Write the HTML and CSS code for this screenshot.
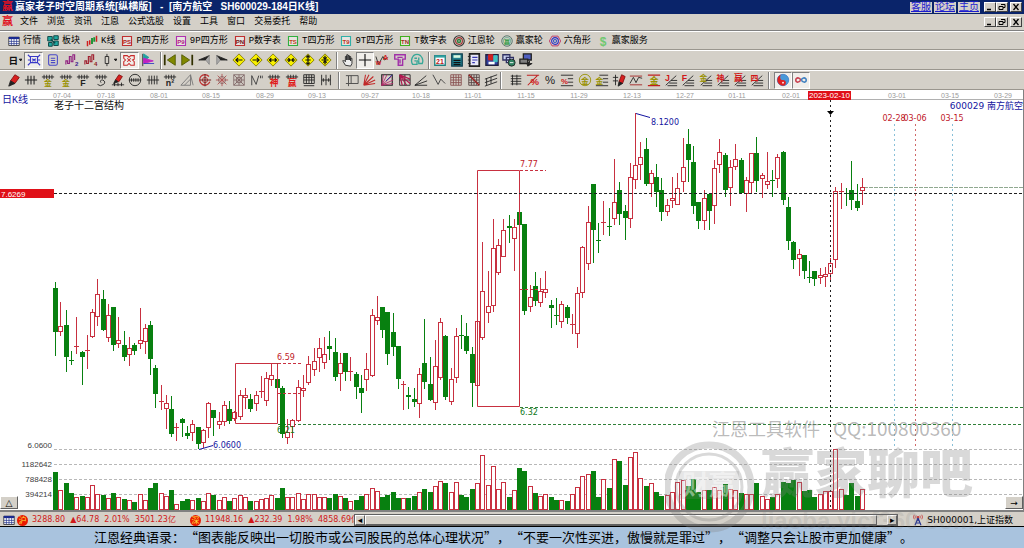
FILE: index.html
```html
<!DOCTYPE html>
<html lang="zh-CN">
<head>
  <meta charset="UTF-8">
  <meta name="viewport" content="width=device-width, initial-scale=1.0">
  <title>赢家老子时空周期系统</title>
  <link rel="stylesheet" href="styles.css">
</head>
<body>
  <header class="titlebar">
    <span class="logo">赢</span>
    <h1>赢家老子时空周期系统[纵横版]   -  [南方航空   SH600029-184日K线]</h1>
    <nav class="links">
      <a href="#service">客服</a>
      <a href="#forum">论坛</a>
      <a href="#home">主页</a>
    </nav>
    <div class="controls" data-controls></div>
  </header>

  <nav class="menubar">
    <span class="logo">赢</span>
    <button>文件</button>
    <button>浏览</button>
    <button>资讯</button>
    <button>江恩</button>
    <button>公式选股</button>
    <button>设置</button>
    <button>工具</button>
    <button>窗口</button>
    <button>交易委托</button>
    <button>帮助</button>
    <div class="controls" data-controls></div>
  </nav>

  <div class="toolbar labels">
    <button data-icon="grid">行情</button>
    <button data-icon="blocks">板块</button>
    <button data-icon="kline">K线</button>
    <button data-icon="ps">P四方形</button>
    <button data-icon="p9">9P四方形</button>
    <button data-icon="pn">P数字表</button>
    <button data-icon="ts">T四方形</button>
    <button data-icon="t9">9T四方形</button>
    <button data-icon="tn">T数字表</button>
    <button data-icon="gann">江恩轮</button>
    <button data-icon="wheel">赢家轮</button>
    <button data-icon="hex">六角形</button>
    <button data-icon="dollar">赢家服务</button>
  </div>

  <div class="toolbar">
    <div class="group period" data-group="day box* list wave1 wave2 candle red* flag"></div>
    <div class="group moves" data-group="first last prev next dleft dright dwide dnarrow dup ddown"></div>
    <div class="group tools" data-group="hand cross* zigzag tee brain"></div>
    <div class="group files" data-group="calendar calc note save copy print"></div>
  </div>

  <div class="toolbar">
    <div class="group lines" data-group="pen bars gold1 gold2 ef spiral penbar circ bars2 nsq tri target star web nline shen ying gridbar split"></div>
    <div class="group fans" data-group="frame fan fanbox fanbox2 angle vee mesh mesh2 chan"></div>
    <div class="group levels" data-group="ladder pctline pct pctbar goldcirc goldbar penline wavebox goldline jfan ffan goldfan shenfan yingfan sifan"></div>
    <div class="group marks" data-group="yin* inf*"></div>
  </div>

  <main class="chart">
    <svg id="kline" role="img" aria-label="南方航空 日K线"></svg>
    <button class="expand" aria-label="展开">△</button>
    <button class="forward" aria-label="向右">→</button>
  </main>

  <footer class="status">
    <span data-icon="grid"></span>
    <span class="coin">沪</span>
    <span class="quote">3288.80  ▲64.78  2.01%  3501.23亿</span>
    <span class="coin">深</span>
    <span class="quote second">11948.16  ▲232.39  1.98%  4858.69亿</span>
    <div class="scroll">
      <button aria-label="左">◂</button>
      <div class="thumb"></div>
      <button aria-label="右">▸</button>
    </div>
    <span class="index"><span data-icon="antenna"></span>SH000001,上证指数</span>
  </footer>

  <p class="motto">江恩经典语录：“图表能反映出一切股市或公司股民的总体心理状况”，“不要一次性买进，傲慢就是罪过”，“调整只会让股市更加健康”。</p>

  <svg class="watermark" aria-hidden="true">
    <text x="47" y="25" class="wm-small">江恩工具软件</text>
    <text x="168" y="25" class="wm-small wm-qq">QQ:100800360</text>
    <circle cx="44" cy="76" r="42" class="wm-ring"/>
    <circle cx="44" cy="76" r="33" class="wm-ring thin"/>
    <path d="M14 60h60v28h-60z" class="wm-fill"/>
    <text x="17" y="84" class="wm-logo">财赢</text>
    <text x="96" y="82" class="wm-big">赢家聊吧</text>
    <text x="96" y="118" class="wm-url">liaoba.yjcf360.com</text>
  </svg>

  <script src="script.js"></script>
</body>
</html>
```
FILE: styles.css
```css
* {
  box-sizing: border-box;
}

body {
  margin: 0;
  min-height: 100vh;
  display: flex;
  flex-direction: column;
  position: relative;
  overflow: hidden;
  background-color: #d4d0c8;
  color: #000000;
  font-family: "Liberation Mono", "Noto Sans CJK SC", monospace;
  font-size: 9px;
  line-height: 12px;
}

button {
  background: none;
  border: none;
  padding: 0;
  margin: 0;
  color: inherit;
  font: inherit;
  white-space: nowrap;
}

/* title bar */
.titlebar {
  display: flex;
  align-items: center;
  height: 14px;
  padding: 0 2px;
  background-color: #0a246a;
  color: #ffffff;
}

.titlebar h1 {
  flex: 1;
  margin: 0;
  font: bold 10px/14px "Liberation Sans", "Noto Sans CJK SC", sans-serif;
  white-space: pre;
}

.logo {
  width: 13px;
  color: #e01020;
  font-size: 11px;
  font-weight: bold;
}

.links {
  display: flex;
  gap: 2px;
  margin-right: 4px;
}

.links a {
  padding: 0 1px;
  background-color: #d4d0c8;
  color: #1a1ad0;
  font-size: 10px;
  line-height: 11px;
}

.controls {
  display: flex;
  margin-left: auto;
}

.controls button {
  width: 12px;
  height: 10px;
  display: flex;
  background-color: #d4d0c8;
  border: 1px solid;
  border-color: #ffffff #404040 #404040 #ffffff;
}

.controls button:last-child {
  margin-left: 2px;
}

.controls svg {
  width: 10px;
  height: 8px;
}

/* menu */
.menubar {
  display: flex;
  align-items: center;
  gap: 9px;
  height: 17px;
  padding: 0 2px;
  border-bottom: 1px solid #808080;
}

.menubar .logo {
  width: 9px;
}

/* toolbars */
.toolbar {
  display: flex;
  align-items: center;
  height: 20px;
  padding-left: 5px;
  border-top: 1px solid #ffffff;
  border-bottom: 1px solid #9a968e;
}

.labels {
  gap: 6px;
  padding-left: 8px;
  height: 19px;
}

.labels button {
  display: flex;
  align-items: center;
  gap: 3px;
}

.labels svg,
.status svg {
  width: 12px;
  height: 12px;
}

.group {
  display: grid;
  grid-auto-flow: column;
  grid-auto-columns: 1fr;
  flex: none;
}

.group + .group {
  border-left: 1px solid #808080;
  box-shadow: inset 1px 0 #ffffff;
}

.group button {
  display: flex;
  justify-content: center;
  align-items: center;
  height: 17px;
}

.group svg {
  width: 14px;
  height: 14px;
  flex: none;
}

.group .on {
  background-color: #f0eeea;
  border: 1px solid;
  border-color: #808080 #ffffff #ffffff #808080;
}

.period { width: 155px; padding-right: 2px; }
.moves { width: 176px; padding-right: 2px; }
.tools { width: 92px; padding: 0 2px; }
.files { width: 107px; padding-left: 2px; }
.lines { width: 333px; padding-right: 3px; }
.fans { width: 162px; padding-left: 4px; }
.levels { width: 268px; padding: 0 2px 0 6px; }
.marks { width: 42px; padding-left: 5px; }

/* chart */
.chart {
  position: relative;
  background-color: #ffffff;
  border-right: 1px solid #808080;
}

.chart > svg {
  display: block;
  width: 100%;
  height: 420px;
}

.chart > button {
  position: absolute;
  bottom: 1px;
  width: 18px;
  height: 13px;
  background-color: #d4d0c8;
  border: 1px solid;
  border-color: #ffffff #606060 #606060 #ffffff;
  font-family: "DejaVu Sans", sans-serif;
  line-height: 10px;
}

.expand { left: 0; }
.forward { right: 0; }

.date { fill: #9a9a9a; font: 7px "Liberation Sans", sans-serif; text-anchor: middle; }
.today { fill: #ffffff; font: 8px "Liberation Sans", sans-serif; text-anchor: middle; }
.name { fill: #1414a0; font-size: 10px; }
.caption { fill: #101010; font-size: 10px; }
.stock { fill: #1414a0; font: 9px "DejaVu Sans", "Noto Sans CJK SC", sans-serif; text-anchor: end; }
.scale { fill: #404040; font: 8px "Liberation Sans", sans-serif; text-anchor: end; }
.cursor { fill: #ffffff; font: 8px "Liberation Sans", sans-serif; }
.red, .green, .blue { font: 8px "DejaVu Sans", sans-serif; }
.red { fill: #c01828; }
.green { fill: #107818; }
.blue { fill: #1414a0; }
.forecast { fill: #c01828; font: 8px "DejaVu Sans", sans-serif; text-anchor: middle; }

/* status bar */
.status {
  display: flex;
  align-items: center;
  height: 17px;
  padding: 2px 11px 0 3px;
  border-top: 2px solid #808080;
  border-bottom: 1px solid #000000;
}

.status > span:first-child {
  display: flex;
  margin-right: 2px;
}

.coin {
  flex: none;
  width: 11px;
  height: 11px;
  margin-right: 4px;
  border-radius: 50%;
  background-color: #e81800;
  color: #ffe040;
  font-size: 8px;
  line-height: 11px;
  text-align: center;
}

.quote {
  width: 158px;
  color: #d01818;
  font: 8px/12px "DejaVu Sans", "Noto Sans CJK SC", sans-serif;
  white-space: pre;
  overflow: hidden;
}

.second {
  width: 149px;
}

.scroll {
  flex: 1;
  display: flex;
  height: 12px;
  border: 1px solid #606060;
}

.scroll button {
  width: 10px;
  background-color: #d4d0c8;
  border: 1px solid;
  border-color: #ffffff #606060 #606060 #ffffff;
  font-family: "DejaVu Sans", sans-serif;
  line-height: 8px;
}

.thumb {
  flex: 1;
  margin-right: 10px;
  background-color: #d4d0c8;
  border: 1px solid;
  border-color: #ffffff #606060 #606060 #ffffff;
}

.index {
  display: flex;
  align-items: center;
  gap: 3px;
  margin-left: 14px;
  font: 9px/12px "DejaVu Sans", "Noto Sans CJK SC", sans-serif;
}

.index span {
  display: flex;
}

.motto {
  flex: 1;
  margin: 0;
  padding-left: 94px;
  background-color: #a9c3de;
  font: 13px/20px "Noto Sans CJK SC", sans-serif;
  text-spacing-trim: space-all;
  white-space: nowrap;
}

/* watermark */
.watermark {
  position: absolute;
  right: 0;
  bottom: 0;
  width: 359px;
  height: 137px;
  pointer-events: none;
  font-family: "Noto Sans CJK SC", sans-serif;
  fill: #808080;
  fill-opacity: 0.3;
}

.wm-small { font-size: 18px; fill-opacity: 0.55; }
.wm-qq { font-size: 19px; }
.wm-big { font-size: 53px; font-weight: 900; }
.wm-logo { font-size: 27px; font-weight: bold; fill: #ffffff; fill-opacity: 0.45; }
.wm-url { font: bold 24px "Liberation Sans", sans-serif; fill-opacity: 0.18; }
.wm-fill { fill-opacity: 0.2; }
.wm-ring { fill: none; stroke: #808080; stroke-opacity: 0.3; stroke-width: 7; }
.thin { stroke-width: 3; }
```
FILE: script.js
```js
// Small helpers for the icon drawings (16x16 box)
const p = (d, c = '#222', w = 1, f = 'none') => `<path d="${d}" stroke="${c}" stroke-width="${w}" fill="${f}"/>`;
const t = (s, x, y, c, size = 9) => `<text x="${x}" y="${y}" fill="${c}" font-size="${size}" font-weight="bold" text-anchor="middle" font-family="Liberation Sans, Noto Sans CJK SC, sans-serif">${s}</text>`;
const o = (r, c, w = 1, f = 'none') => `<circle cx="8" cy="8" r="${r}" stroke="${c}" stroke-width="${w}" fill="${f}"/>`;
const tag = (s, border, c) => p('M2 2h12v12h-12z', border, 1.5, '#e8e4e0') + t(s, 8, 11.5, c, 8);
const diamond = (d) => p('M8 1L15 8L8 15L1 8z', '#807800', 1, '#f8f000') + p(d, '#111', 1.4);
const ticks = p('M1 4.5h14M3.5 2v5M6.5 2v5M9.500 2v5M12.500 2v5');
const penHead = p('M4 9l5-7 5 3-5 7z', '#801010', 1, '#d82020') + p('M4 9l5 3-7 3z', '#222', 1, '#222');
const steps = p('M4 14.500h11M6 11.500h9M8 8.500h7M2 14L14 3');
const rays = 'M2 14L4 2M2 14L8 2M2 14L13 4M2 14L15 8M2 14L15 12';

const icons = {
  grid: p('M1 3h14v11h-14z', '#222', 1, '#fff') + p('M1 4h14', '#1a2a90', 3) + p('M1 8.500h14M1 11.500h14M4.500 5v9M8 5v9M11.500 5v9', '#2a3a90'),
  blocks: p('M1 2h6v6h-6zM9 1h6v5h-6zM2 10h5v5h-5zM9 8h6v6h-6z', '#104848', 1.3, '#20a8a0') + p('M5 6l6 5', '#104848', 2),
  kline: p('M2 8v7M5 7v6M14 1v8', '#d02020', 2) + p('M8 4v8M11 3v6', '#189030', 2.500),
  ps: tag('PS', '#c03030', '#b02020'),
  p9: tag('P9', '#b030b0', '#b02080'),
  pn: tag('PN', '#c03030', '#701818'),
  ts: tag('TS', '#30b040', '#c04020'),
  t9: tag('T9', '#30b0a8', '#c03020'),
  tn: tag('TN', '#40b020', '#a03020'),
  gann: o(7, '#303030', 1.5) + o(4.5, '#a03030', 1.5) + o(2, '#308040', 2),
  wheel: o(7, '#507068', 1.2) + o(5, '#60a890') + t('赢', 8, 11.5, '#40a050', 8),
  hex: p('M4 1.500h8L15.500 8L12 14.500H4L.5 8z', '#c03060', 1.2) + o(4.5, '#3030c0', 1.5) + o(2, '#3050c0', 1.5),
  dollar: t('$', 8, 14, '#70c870', 16),
  antenna: p('M8 5L4 15M8 5l4 10M5 12h6M6 9h4', '#203090', 1.4) + p('M3 1q-2 3 0 6M13 1q2 3 0 6M5.500 2q-1 2 0 4M10.500 2q1 2 0 4', '#c83030') + '<circle cx="8" cy="4" r="1.500" fill="#c83030"/>',

  day: t('日', 6, 12.500, '#111', 11) + p('M13 7h3l-1.500 2z', '#111', 1, '#111'),
  box: p('M4 4h8v7h-8zM1 2l3 3M15 2l-3 3M1 14l3-3M15 14l-3-3M1 8h3M12 8h3M6 6.500l4 3M10 6.500l-4 3', '#3838c8', 1.3),
  list: p('M3 3q0-1 2-1h6q2 0 2 2v8q0 2-2 2h-6q-2 0-2-2zM5.500 6h5M5.500 8.500h5M5.500 11h5', '#4848c8', 1.2),
  wave1: p('M1 13v-4h2v3h2v-8h2v6h2v-8h2v6', '#902080', 1.3) + t('2', 13.500, 15, '#402090', 7),
  wave2: p('M1 13v-4h2v3h2v-8h2v6h2v-8h2v6', '#a02030', 1.3) + t('4', 13.500, 15, '#902020', 7),
  candle: p('M4.500 1v14') + p('M2.500 4h4v8h-4z', '#222', 1, '#d4d0c8') + p('M13 7h3l-1.500 2z', '#111', 1, '#111'),
  red: p('M2 3h4l2 2 2-2h4v4l-2 1 2 2v4h-4l-2-2-2 2H2v-4l2-2-2-2zM6 6l4 4M10 6l-4 4', '#c82828', 1.2),
  flag: p('M2 1v14') + p('M3 1l6 4-6 4z', '#20a0a0', 1, '#20a0a0') + p('M3 6l11 3-11 3z', '#c020c0', 1, '#c020c0') + p('M3 12h12', '#3040c0', 1),
  first: p('M2 2v12', '#303000', 2) + p('M14 2L5 8l9 6z', '#505800', 1, '#808800'),
  last: p('M14 2v12', '#303000', 2) + p('M2 2l9 6-9 6z', '#505800', 1, '#808800'),
  prev: p('M14 3L2 8h8z', '#222', 1, '#222') + p('M10 8l4 5V3', '#888', 1, '#aaa'),
  next: p('M2 3l12 5H6z', '#222', 1, '#222') + p('M6 8l-4 5V3', '#888', 1, '#aaa'),
  dleft: diamond('M12 8H5M7 5.500L4.500 8L7 10.500'),
  dright: diamond('M4 8h7M9 5.500L11.500 8L9 10.500'),
  dwide: diamond('M4 8h8M6 6L4 8l2 2M10 6l2 2-2 2'),
  dnarrow: diamond('M3 8h4M9 8h4M5 6l2 2-2 2M11 6L9 8l2 2'),
  dup: diamond('M8 3v10M6 5l2-2 2 2M6 11l2 2 2-2M5 8h6'),
  ddown: diamond('M8 3v4M8 9v4M6 5l2 2 2-2M6 11l2-2 2 2M4 8h8'),
  hand: p('M5 14l-3-5 1-1 2 2V4h1.500v4V2H8v6V3h1.500v5V4H11v5V6h1.500v6l-1.500 3z', '#222', 1, '#eee'),
  cross: p('M8 1v14M1 8h14', '#111', 1.3),
  zigzag: p('M1 4l3 9 5-9 2 4 4-3') + t('w', 4, 14, '#d02020', 8) + t('A', 12, 8, '#d02020', 8),
  tee: p('M2 2h12v5h-3v7H6V7H2zM5 5h6M8 7v5', '#a030a8', 1.6),
  brain: p('M4 3q4-3 8 0 4 4 2 9h-4v-3h-2v4H3q-3-5 1-10zM5 6h3M10 5v3M5 9h2', '#38a898', 1.5),
  calendar: p('M2 3h12v11H2z', '#208080', 1.500, '#fff') + p('M2 4h12', '#30a0a0', 2.500) + t('21', 8, 13, '#c02020', 8),
  calc: p('M2 1h12v14H2z', '#104050', 1.500, '#208090') + p('M4 4h8', '#d8f8e0', 3) + p('M4 8.500h8M4 11h8M4 13.300h8', '#111', 1.3),
  note: p('M3 1h11v14H3z', '#222', 2, '#e8e8f8') + p('M6 5h6M6 8h6M6 11h3', '#3838b0', 1.300) + p('M1 4h3M1 8h3M1 12h3'),
  save: p('M1 2h14v12H1z', '#202040', 1.500, '#3040a0') + p('M4 2h5v6H4z', '#d02020', 1, '#d02020') + p('M10 3h4v7h-4z', '#40c0c0', 1, '#40c0c0') + p('M4 11.500h7', '#fff', 3),
  copy: p('M1 2h8v6H1zM5 5h8v6H5z', '#303060', 1.500, '#c8d0f0') + '<circle cx="11" cy="11" r="4" fill="#308060" stroke="#222"/>' + p('M9 11h4', '#fff'),
  print: p('M5 1h9v7H5z', '#222', 1.500, '#5060c0') + p('M1 7h9v5H1z', '#222', 1.500, '#808080') + p('M12 9v3h3l-5 3-1-3', '#222', 1, '#222'),

  pen: penHead,
  bars: p('M1 8h14M4.500 3v10M8 3v10M11.500 3v10', '#222', 1.2),
  gold1: ticks + t('金', 8, 15, '#989000', 9),
  gold2: ticks + t('金', 8, 15, '#989000', 9),
  ef: ticks + t('F', 8, 15, '#222', 10),
  spiral: ticks + p('M8 11q-2-3 2-3 4 2 1 5-4 3-7 0'),
  penbar: p('M1 13.500h14M4 11v4M8 11v4M12 11v4') + p('M5 8l4-6 4 2-4 6z', '#801010', 1, '#d82020') + p('M5 8l3 2-5 2z', '#222', 1, '#222'),
  circ: o(6.5, '#222') + p('M1 8h14M4 6v4M6.500 6v4M9 6v4M11.500 6v4'),
  bars2: p('M1 8h14M3.500 3v10M6.500 3v10M9.500 3v10M12.500 3v10'),
  nsq: ticks + t('n²', 8, 15, '#222', 10),
  tri: p('M1 14L12 2v12zM12 2l3 12M5 14l7-7', '#777'),
  target: p('M12.500 4a6 6 0 1 0 1 6', '#c03030', 1.4) + o(3, '#b83030') + p('M8 1v14M2 8h13', '#702020', 1.2),
  star: p('M8 1v14M1 8h14M3 3l10 10M13 3L3 13', '#b05050') + o(4, '#886060'),
  web: p('M2 2h12v12H2zM2 2l12 12M14 2L2 14M8 2v12M2 8h12M5 5h6v6H5z', '#806868'),
  nline: p('M2 14V3M2 3l5 10L10 3M12 3v3M14 3v3', '#444', 1.1),
  shen: ticks + t('神', 8, 15, '#e01818', 10),
  ying: ticks + t('赢', 8, 15, '#e01818', 10),
  gridbar: p('M2 2h12v10H2zM2 5h12M2 8h12M5 2v10M8 2v10M11 2v10M2 14.500h12'),
  split: p('M3 2v12M8 2v12M13 2v12M3 8h10M5 6v4M11 6v4'),
  frame: p('M4 3h11v9H4zM1 3h3M1 12h3M4 12v3M7 12v-9', '#444'),
  fan: p(rays, '#c02828', 1.2),
  fanbox: p('M2 2h12v12H2z', '#222', 1.3) + p(rays, '#b02868') + p('M7 9l7-7', '#2828a0'),
  fanbox2: p('M3 2h12v12H3zM3 8h12M9 2v12', '#222') + p('M3 2l3 12M3 2l8 12M3 2l12 10M3 2l12 5', '#b01850', 1.3),
  angle: p('M1 14L14 3M1 14L15 9M1 14h14'),
  vee: p('M1 2l6 11 3-6 3 3M13 10l2 2', '#444', 1.1),
  mesh: p('M2 2h12v12H2zM2 5h12M2 8h12M2 11h12M5 2v12M8 2v12M11 2v12', '#885050'),
  mesh2: p('M2 2h12v12H2zM2 5h12M2 8h12M2 11h12M5 2v12M8 2v12M11 2v12', '#554444') + p('M2 2l12 12', '#a02020', 1.300),
  chan: p('M1 7L15 2M1 11L15 6M1 15l14-5M3 6v8M8 4v8'),
  ladder: p('M4 2v12M9 2v12M2 3.500h12M2 6.500h12M2 9.500h12M2 12.500h12'),
  pctline: p('M1 2.500h14M2 14L13 3', '#c02020', 1.2) + t('%', 10, 14, '#d01818', 11),
  pct: '<text x="8" y="12.500" fill="#222" font-size="13" text-anchor="middle" font-family="Liberation Sans, sans-serif">%</text>',
  pctbar: p('M1 2.500h14M9 6.500h6M9 10.500h6M1 14.500h14') + t('%', 5, 12, '#d01818', 9),
  goldcirc: o(6.5, '#989000') + t('金', 8, 12, '#989000', 9),
  goldbar: p('M5 2.500h10M9 6.500h6M9 10.500h6M1 14.500h14') + t('金', 5, 12, '#989000', 9),
  penline: p('M4 2v12M1 5h6M1 9h6') + p('M8 10l3-8 4 2-3 8z', '#801010', 1, '#d82020') + p('M8 10l4 2-5 3z', '#222', 1, '#222'),
  wavebox: p('M1 3.500h14M1 13.500h14', '#a02020') + p('M1 12L5 5l3 6 3-6 4 1'),
  goldline: p('M1 2.500h14M1 14.500h14', '#c02020', 1.3) + t('金', 8, 13, '#989000', 10),
  jfan: steps + t('J', 4, 9, '#d01818', 10),
  ffan: steps + t('F', 4, 9, '#d01818', 10),
  goldfan: steps + t('金', 5, 9, '#989000', 9),
  shenfan: steps + t('神', 5, 9, '#d01818', 9),
  yingfan: steps + t('赢', 6, 9, '#d01818', 10),
  sifan: steps + t('四', 5, 9, '#d01818', 9),
  yin: o(6.5, '#4080c8', 1, '#4898d8') + '<path d="M8 1.500a6.500 6.500 0 0 0 0 13a3.200 3.200 0 0 0 0-6.500a3.200 3.200 0 0 1 0-6.500" fill="#e02020"/><circle cx="8" cy="11" r="1" fill="#fff"/>',
  inf: p('M8 8q-3-4-5.500-1.500-1.500 3 1.500 4 2 0 4-2.500', '#c84050', 1.8) + p('M8 8q3-4 5.500-1.500 1.500 3-1.500 4-2 0-4-2.500', '#4080c0', 1.8)
};

const svg = (name) => `<svg viewBox="0 0 16 16" aria-hidden="true">${icons[name]}</svg>`;

document.querySelectorAll('[data-icon]').forEach(function (el) {
  el.insertAdjacentHTML('afterbegin', svg(el.dataset.icon));
});

// A trailing * marks a pressed button
document.querySelectorAll('[data-group]').forEach(function (el) {
  el.innerHTML = el.dataset.group.split(' ').map(function (item) {
    const name = item.replace('*', '');
    return `<button aria-label="${name}"${item === name ? '' : ' class="on"'}>${svg(name)}</button>`;
  }).join('');
});

document.querySelectorAll('[data-controls]').forEach(function (el) {
  const shapes = [
    ['最小化', 'M2 6.500h4', 1.500],
    ['还原', 'M4 1.500h4v3h-2M2 3.500h4v3H2z', 1],
    ['关闭', 'M2.500 1l5 6M7.500 1l-5 6', 1.300]
  ];
  el.innerHTML = shapes.map(([label, d, w]) => `<button aria-label="${label}"><svg viewBox="0 0 10 8">${p(d, '#000', w)}</svg></button>`).join('');
});

// colour, high, body top, body bottom, low, volume top
const candles = `
g 282 288 332 356 472|r 302 326 331 336 490|g 310 325 357 372 483|g 351 360 361 365 493|r 317 346 347 354 497|g 351 352 357 385 496
r 335 350 351 369 497|r 309 312 336 338 485|r 279 294 316 326 494|g 290 299 330 331 495|r 304 315 337 342 498|g 307 307 345 351 493
r 317 340 343 348 497|g 331 345 357 361 499|r 337 348 354 366 500|g 343 345 351 355 502|r 308 340 343 349 494|r 324 328 341 354 500
g 321 325 359 375 488|g 365 368 394 408 483|r 385 401 402 410 493|r 395 403 408 429 496|g 396 409 434 437 490|r 423 427 428 441 504
g 418 419 423 437 501|g 426 433 436 439 499|r 420 424 432 441 500|g 427 427 444 449 498|r 429 430 442 448 501|r 402 403 427 438 493
g 410 410 418 436 495|r 412 421 424 429 500|r 401 405 421 426 497|g 401 409 421 424 501|r 411 412 418 421 498|r 390 395 416 420 495
r 388 395 397 409 497|g 394 399 409 412 501|r 391 395 403 411 501|r 376 391 392 398 499|r 372 378 400 406 498|r 363 375 379 386 495
g 363 379 388 389 498|g 386 388 434 438 488|r 419 432 437 444 497|r 419 420 426 438 497|r 380 387 420 422 493|r 375 388 390 397 499
r 356 364 382 385 494|r 348 361 369 376 494|r 338 348 357 372 497|r 337 354 362 369 497|g 331 346 349 360 498|g 338 352 377 381 494
r 353 363 373 391 496|g 353 353 372 381 498|r 357 371 372 381 501|g 372 374 387 399 500|g 375 388 393 413 496|r 353 369 379 391 494
r 309 315 375 377 488|r 296 317 320 325 491|g 307 307 330 338 497|g 312 312 354 365 495|g 313 332 347 356 492|g 346 346 379 389 498
r 381 384 385 410 498|g 387 395 397 409 498|g 388 399 402 407 496|r 368 374 403 418 492|g 319 363 382 389 489|g 357 384 400 401 492
r 340 366 402 410 486|r 318 322 377 380 481|g 335 336 397 400 483|r 368 379 401 405 492|r 328 336 377 383 482|g 315 335 336 349 495
g 323 336 351 354 497|g 347 354 383 407 489|r 320 321 385 386 483|r 242 291 337 340 455|r 271 306 312 323 485|r 219 248 305 312 466
r 239 245 272 275 489|r 219 230 256 257 482|g 215 226 228 243 497|r 219 227 238 271 490|g 171 212 225 226 468|g 224 224 311 315 471
r 285 297 306 312 486|g 272 286 301 306 493|r 278 291 302 307 496|r 271 289 292 298 494|g 300 305 308 328 497|g 298 315 316 325 500
r 301 304 321 328 500|g 305 307 318 324 501|r 314 324 325 334 494|r 287 293 333 348 487|r 246 247 292 298 476|r 206 222 263 270 474
g 184 184 230 263 471|g 223 240 241 253 497|r 201 222 223 235 479|g 208 226 227 236 488|r 159 202 218 225 459|g 182 190 214 225 461
g 205 211 218 240 485|r 163 177 218 228 457|r 113 165 179 189 452|r 142 157 164 180 478|g 138 149 184 186 486|r 170 173 183 197 483
g 164 177 192 207 492|g 178 190 212 221 496|r 199 205 211 216 495|r 177 198 200 208 492|r 173 188 204 205 482|r 138 167 181 192 480
g 129 144 160 182 486|g 146 162 206 214 479|g 202 202 221 229 492|r 190 198 220 230 490|g 194 194 211 230 490|r 160 168 205 224 487
r 139 152 164 173 490|g 153 155 190 197 484|r 160 167 187 206 489|r 144 159 166 170 490|g 158 160 193 194 493|r 177 180 193 212 494
r 153 153 182 193 494|g 137 153 181 192 483|r 173 175 178 198 496|r 152 181 184 189 499|g 170 180 181 197 497|r 154 157 178 188 494
g 151 152 200 205 482|g 197 207 241 250 483|g 241 242 260 269 480|r 249 254 258 276 482|g 255 255 271 279 491|g 261 277 278 283 490
g 271 271 279 286 497|r 268 275 277 284 494|r 267 274 276 287 491|r 258 263 273 282 491|r 187 191 259 268 449|r 183 191 192 209 489
g 188 193 194 206 495|g 161 190 200 210 483|g 184 201 208 211 496|r 178 187 190 205 489`.trim().split(/[|\n]/);

const red = '#c83040';
const green = '#088010';
const step = 5.272;

function line(x1, y1, x2, y2, color, dash) {
  return `<line x1="${x1}" y1="${y1}" x2="${x2}" y2="${y2}" stroke="${color}"${dash ? ` stroke-dasharray="${dash}"` : ''} shape-rendering="crispEdges"/>`;
}

function label(text, x, y, cls) {
  return `<text x="${x}" y="${y}" class="${cls}">${text}</text>`;
}

function drawCandle(row, i) {
  const [kind, ...nums] = row.split(' ');
  const [high, top, bottom, low, vol] = nums.map(Number);
  const x = Math.round(55.2 + i * step);
  const color = kind === 'g' ? green : red;
  let s = line(x + 0.5, high, x + 0.5, low, color);
  if (kind === 'g') {
    s += `<rect x="${x - 2}" y="${top}" width="5" height="${bottom - top}" fill="${green}"/>`;
    s += `<rect x="${x - 2}" y="${vol}" width="5" height="${510 - vol}" fill="${green}"/>`;
  } else {
    s += bottom - top < 2
      ? line(x - 2, top + 0.5, x + 3, top + 0.5, red)
      : `<rect x="${x - 1.5}" y="${top + 0.5}" width="4" height="${bottom - top}" fill="#fff" stroke="${red}"/>`;
    s += `<rect x="${x - 1.5}" y="${vol + 0.5}" width="4" height="${509 - vol}" fill="#fff" stroke="${red}"/>`;
  }
  return s;
}

function drawChart() {
  const dates = [['07-04', 62], ['07-18', 106], ['08-01', 159], ['08-15', 211], ['08-29', 265], ['09-13', 317],
    ['09-27', 370], ['10-18', 421], ['11-01', 473], ['11-15', 526], ['11-29', 579], ['12-13', 632], ['12-27', 685],
    ['01-11', 737], ['02-01', 791], ['03-01', 897], ['03-15', 950], ['03-29', 1003]];
  let s = dates.map(([d, x]) => label(d, x, 98, 'date')).join('');
  s += line(0, 99.5, '100%', 99.5, '#b0b0b0');
  s += `<rect x="808" y="91" width="43" height="9" fill="#e01018"/>` + label('2023-02-10', 829.5, 98, 'today');

  // price and volume grid
  [449.5, 464.5, 479.5, 494.5].forEach((y) => { s += line(54, y, '100%', y, '#b8b8b8', '3 2'); });
  s += label('6.0600', 52, 448, 'scale') + label('1182642', 52, 467, 'scale');
  s += label('788428', 52, 482, 'scale') + label('394214', 52, 497, 'scale');

  // support lines and forecast days
  s += line(520, 407.5, '100%', 407.5, '#308038', '3 2') + line(278, 424.5, '100%', 424.5, '#308038', '3 2');
  s += line(864, 187.5, '100%', 187.5, '#90a890', '4 1');
  [['02-28', 894, '#88c0d8'], ['03-06', 915, '#d06868'], ['03-15', 952, '#88c0d8']].forEach(([d, x, c]) => {
    s += label(d, x, 121, 'forecast') + line(x + 0.5, 124, x + 0.5, 449, c, '2 3');
  });

  s += candles.map(drawCandle).join('');

  // boxes with their top, middle and bottom levels
  s += `<path d="M235.500 363.500h42v60h-42zM477.500 170.500h42v236h-42z" fill="none" stroke="${red}"/>`;
  s += line(278, 363.5, 303, 363.5, red, '3 2') + line(278, 393.5, 303, 393.5, red, '3 2');
  s += line(520, 170.5, 546, 170.5, red, '3 2') + line(520, 289.5, 546, 289.5, red, '3 2');
  s += label('6.59', 277, 360, 'red') + label('7.77', 520, 167, 'red');
  s += label('6.21', 277, 433, 'green') + label('6.32', 520, 415, 'green');
  s += '<path d="M636 113.500l14 4M199 449.500l14-4" stroke="#1414a0" fill="none"/>';
  s += label('8.1200', 651, 125, 'blue') + label('6.0600', 213, 448, 'blue');

  // crosshair
  s += line(54, 193.5, '100%', 193.5, '#202020', '3 2') + line(830.5, 100, 830.5, 510, '#202020', '2 3');
  s += '<path d="M827 111h7l-3.500 4z" fill="#000"/><rect x="0" y="189" width="54" height="9" fill="#e01018"/>';
  s += label('7.6269', 1, 197, 'cursor');

  s += '<rect x="0" y="94" width="30" height="12" fill="#fff"/>';
  s += label('日K线', 2, 103, 'name') + label('老子十二宫结构', 54, 109, 'caption');
  // right-aligned to the window edge
  s += label('600029 南方航空', '100%', 109, 'stock');

  document.getElementById('kline').innerHTML = `<g transform="translate(0 -90)">${s}</g>`;
}

drawChart();
```
